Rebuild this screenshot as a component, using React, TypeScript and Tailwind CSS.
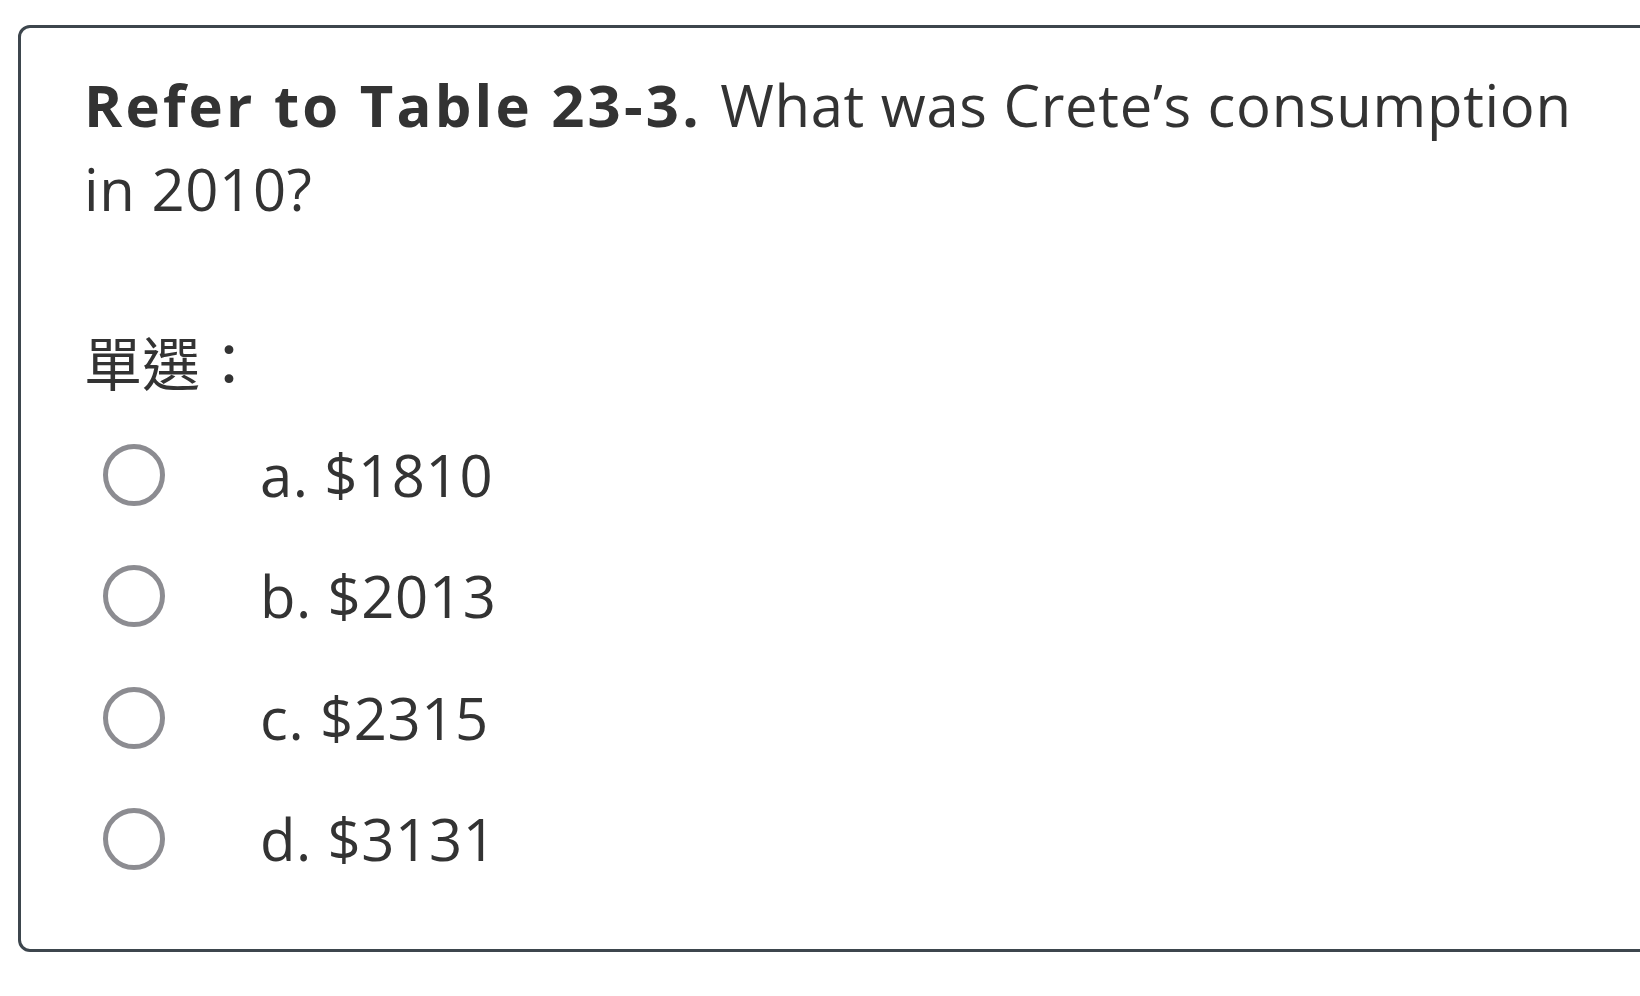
const options = ["a. $1810", "b. $2013", "c. $2315", "d. $3131"];

const Radio = () => (
  <span className="block size-[62px] shrink-0 rounded-full border-[5px] border-[#8c8c91] bg-white" />
);

export default function App() {
  return (
    <div className="h-[996px] w-[1640px] overflow-hidden bg-white font-['Open_Sans','Noto_Sans_CJK_TC',sans-serif] text-[58px] leading-[84px] text-[#333333]">
      <div className="ml-[18px] mt-[25px] w-[1700px] rounded-[12px] border-[3px] border-[#3d464d] pb-[49px] pl-[63px] pr-[100px] pt-[35px]">
        <p className="tracking-[0.7px]">
          <span className="font-bold tracking-[3.2px]">Refer to Table 23-3. </span>
          What was Crete’s consumption in 2010?
        </p>

        <p className="mt-[91px]">單選：</p>

        <ul className="mt-[8px] flex flex-col">
          {options.map((opt) => (
            <li key={opt} className="flex h-[121.5px] items-center">
              <span className="ml-[19px]">
                <Radio />
              </span>
              <span className="ml-[95px] tracking-[0.6px]">{opt}</span>
            </li>
          ))}
        </ul>
      </div>
    </div>
  );
}
